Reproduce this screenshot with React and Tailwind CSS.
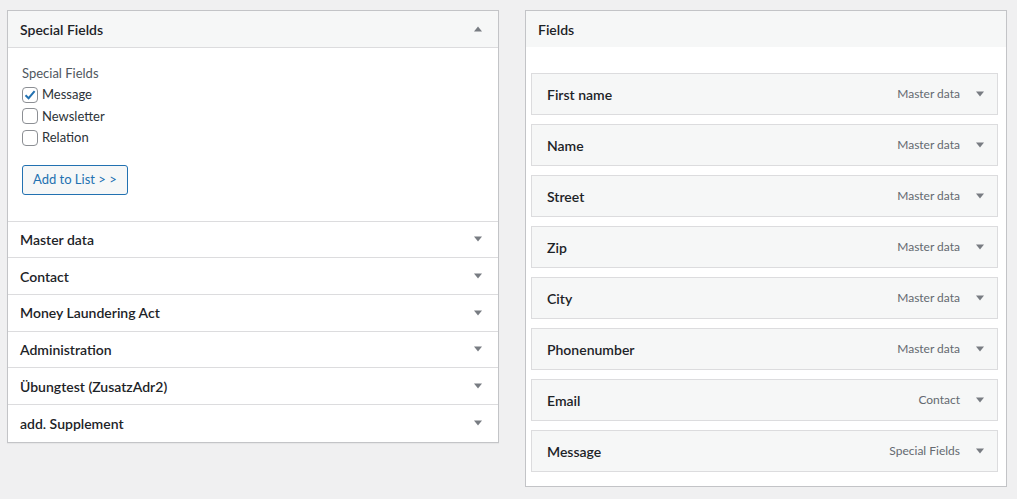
import { useState } from 'react';

const font = { fontFamily: 'Lato, "Noto Sans", sans-serif' };

const groups = [
  'Master data',
  'Contact',
  'Money Laundering Act',
  'Administration',
  'Übungtest (ZusatzAdr2)',
  'add. Supplement',
];

const fields = [
  { name: 'First name', group: 'Master data' },
  { name: 'Name', group: 'Master data' },
  { name: 'Street', group: 'Master data' },
  { name: 'Zip', group: 'Master data' },
  { name: 'City', group: 'Master data' },
  { name: 'Phonenumber', group: 'Master data' },
  { name: 'Email', group: 'Contact' },
  { name: 'Message', group: 'Special Fields' },
];

function Arrow({ up }) {
  return (
    <svg width="10" height="6" viewBox="0 0 10 6" className="fill-[#787c82]">
      {up ? <polygon points="5,0.5 9,5.5 1,5.5" /> : <polygon points="1,0.5 9,0.5 5,5.5" />}
    </svg>
  );
}

function Check({ label, checked, onChange }) {
  return (
    <label className="flex items-center gap-[4px] h-[21.5px] text-[13px] text-[#2c3338] cursor-pointer">
      <span
        onClick={onChange}
        className="w-[16px] h-[16px] rounded-[4px] border border-[#8c8f94] bg-white flex items-center justify-center"
      >
        {checked && (
          <svg width="14" height="14" viewBox="0 0 14 14">
            <path d="M2.5 7.2 L5.6 10.2 L11.6 3.2" fill="none" stroke="#2271b1" strokeWidth="2" />
          </svg>
        )}
      </span>
      {label}
    </label>
  );
}

export default function App() {
  const [checked, setChecked] = useState({ Message: true, Newsletter: false, Relation: false });
  const toggle = (k) => setChecked(prev => ({ ...prev, [k]: !prev[k] }));

  return (
    <div className="min-h-[499px] bg-[#f0f0f1] flex items-start gap-[26px] pt-[10px] pl-[7px]" style={font}>
      {/* Left: field groups */}
      <div className="w-[492px] bg-white border border-[#c3c4c7] shadow-[0_1px_1px_rgba(0,0,0,0.04)]">
        <div className="h-[37px] bg-[#f6f7f7] border-b border-[#dcdcde] flex items-center justify-between pl-[12px] pr-[15px]">
          <span className="text-[14px] font-semibold text-[#1d2327]">Special Fields</span>
          <Arrow up />
        </div>
        <div className="pl-[14px] pt-[16px] pb-[26px] border-b border-[#dcdcde]">
          <div className="text-[13px] leading-[19px] text-[#50575e] mb-[1px]">Special Fields</div>
          {['Message', 'Newsletter', 'Relation'].map(k => (
            <Check key={k} label={k} checked={checked[k]} onChange={() => toggle(k)} />
          ))}
          <button className="mt-[16px] h-[30px] px-[10px] rounded-[3px] border border-[#2271b1] bg-[#f6f7f7] text-[13px] text-[#2271b1]">
            Add to List &gt; &gt;
          </button>
        </div>
        {groups.map((g, i) => (
          <div
            key={g}
            className={`h-[36.7px] flex items-center justify-between pl-[12px] pr-[15px] ${i < groups.length - 1 ? 'border-b border-[#dcdcde]' : ''}`}
          >
            <span className="text-[14px] font-semibold text-[#1d2327]">{g}</span>
            <Arrow />
          </div>
        ))}
      </div>

      {/* Right: selected fields */}
      <div className="w-[482px] bg-white border border-[#c3c4c7] pb-[14px]">
        <div className="h-[36px] bg-[#f6f7f7] flex items-center pl-[12px]">
          <span className="text-[14px] font-semibold text-[#1d2327]">Fields</span>
        </div>
        <div className="flex flex-col gap-[9px] pt-[26px] pl-[5px] pr-[8px]">
          {fields.map(f => (
            <div
              key={f.name}
              className="h-[42px] bg-[#f6f7f7] border border-[#dcdcde] flex items-center pl-[15px] pr-[12px]"
            >
              <span className="flex-1 text-[14px] font-semibold text-[#1d2327]">{f.name}</span>
              <span className="text-[12px] text-[#646970] mr-[15px]">{f.group}</span>
              <Arrow />
            </div>
          ))}
        </div>
      </div>
    </div>
  );
}
